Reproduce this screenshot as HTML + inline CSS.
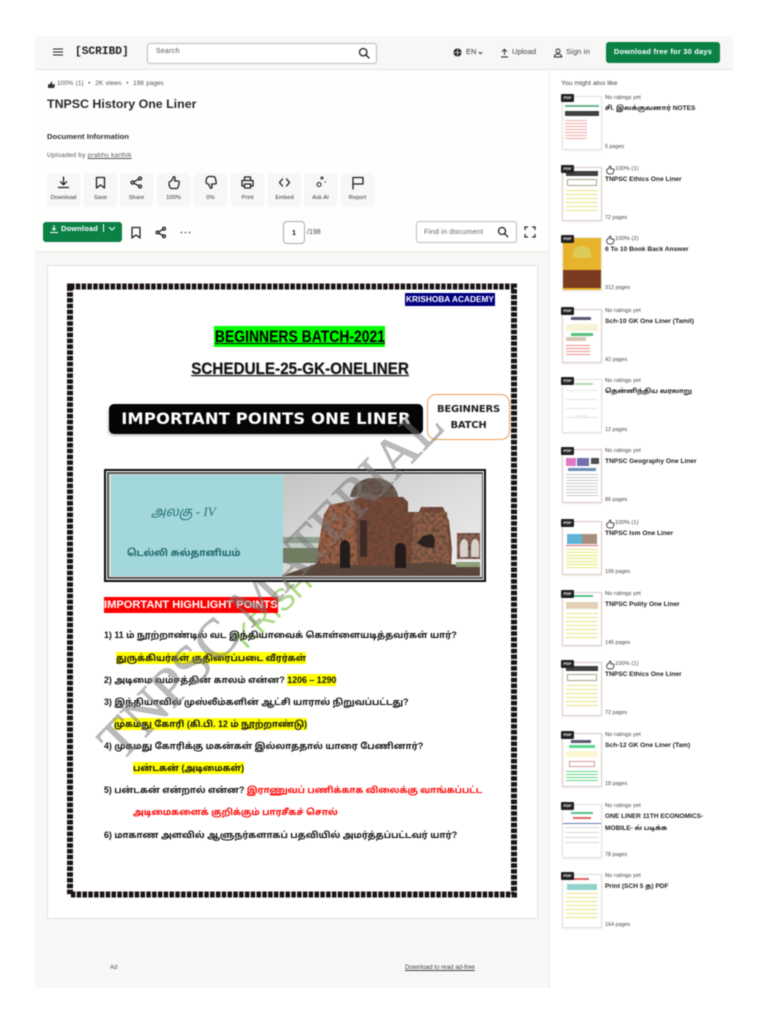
<!DOCTYPE html>
<html lang="en"><head><meta charset="utf-8"><title>TNPSC History One Liner</title>
<style>
*{box-sizing:border-box}
html,body{margin:0;padding:0;background:#fff;width:768px;height:1024px;overflow:hidden}
body{font-family:"Liberation Sans",sans-serif;color:#1e1e1e;position:relative}
#w{position:absolute;left:0;top:0;width:768px;height:1024px;filter:blur(.45px);overflow:hidden}
.a{position:absolute;white-space:nowrap}
.t{position:absolute;left:47px;top:173px;width:33px;height:34px;background:#f8f7f5;border-radius:3px;text-align:center}
.t svg{position:absolute;left:9px;top:2px;width:15px;height:15px}
.t span{position:absolute;left:0;right:0;top:22px;font-size:5.8px;line-height:7px;color:#333}
svg{overflow:visible}
.i{fill:none;stroke:#1e1e1e;stroke-width:1.3;stroke-linecap:round;stroke-linejoin:round}
.q{position:absolute;left:104px;font:bold 8.85px/13px "Liberation Sans","Noto Sans Tamil","Lohit Tamil",sans-serif;color:#111;white-space:nowrap}
.y{background:#ff0;padding:1px 0}
.s{position:absolute;left:561px;width:180px;height:60px}
.s .th{position:absolute;left:1px;top:2px;width:40px;height:54px;background:#fff;border:1px solid #e4e1dc;box-shadow:0 1px 2px #eee;overflow:hidden}
.s .th .b{opacity:.75}
.s .pdf{position:absolute;left:0;top:0;width:13px;height:8px;background:#222;color:#fff;font:bold 4px/8px "Liberation Sans",sans-serif;text-align:center;border-radius:1px}
.s .r{position:absolute;left:44px;top:0;font-size:5.8px;line-height:8px;color:#444;white-space:nowrap}
.s .r.u{left:54px}
.s .n{position:absolute;left:44px;top:9px;font:bold 6.6px/11.5px "Liberation Sans","Noto Sans Tamil",sans-serif;color:#222;white-space:nowrap}
.s .p{position:absolute;left:44px;top:49px;font-size:5.4px;line-height:8px;color:#444;white-space:nowrap}
.s svg.u{position:absolute;left:44px;top:0;width:10px;height:10px}
.b{position:absolute}
</style></head><body><div id="w">

<!-- header -->
<div class="a" style="left:35px;top:36px;width:698px;height:34px;background:#f8f7f5;border-bottom:1px solid #e7e5e1"></div>
<svg class="a" style="left:52px;top:48px" width="12" height="8"><path d="M1 1h10M1 4h10M1 7h10" stroke="#222" stroke-width="1.1"/></svg>
<div class="a" style="left:75px;top:44px;font:bold 11.2px/16px 'Liberation Mono',monospace;color:#1e1e1e">[SCRIBD]</div>
<div class="a" style="left:147px;top:43px;width:230px;height:21px;background:#fff;border:1px solid #bdbbb6;border-radius:3px"></div>
<div class="a" style="left:156px;top:47px;font-size:7px;line-height:10px;color:#555;letter-spacing:.25px">Search</div>
<svg class="a i" style="left:358px;top:47px" width="12" height="12" viewBox="0 0 12 12"><circle cx="5.2" cy="5.2" r="3.7"/><path d="M8 8l3 3"/></svg>
<svg class="a" style="left:453px;top:48px" width="9" height="9" viewBox="0 0 9 9"><circle cx="4.5" cy="4.5" r="4" fill="#222"/><path d="M1 4.5h7M4.5 1v7" stroke="#f8f7f5" stroke-width=".7"/></svg>
<div class="a" style="left:466px;top:47px;font-size:7.5px;line-height:10px;color:#333">EN</div>
<svg class="a" style="left:478px;top:51px" width="5" height="4"><path d="M.7 1l1.8 1.8L4.3 1" fill="none" stroke="#333" stroke-width=".9"/></svg>
<svg class="a" style="left:500px;top:48px" width="9" height="10" viewBox="0 0 9 10"><path d="M4.5 7V1.5M2 3.8l2.5-2.5L7 3.8M1 9h7" fill="none" stroke="#222" stroke-width=".9"/></svg>
<div class="a" style="left:512px;top:47px;font-size:7.6px;line-height:10px;color:#444">Upload</div>
<svg class="a" style="left:553px;top:48px" width="10" height="10" viewBox="0 0 10 10"><circle cx="5" cy="3" r="2" fill="none" stroke="#222" stroke-width=".9"/><path d="M1.2 9c.3-2.3 1.8-3 3.8-3s3.500 .7 3.800 3z" fill="none" stroke="#222" stroke-width=".9"/></svg>
<div class="a" style="left:566px;top:47px;font-size:7.6px;line-height:10px;color:#444;letter-spacing:.1px">Sign in</div>
<div class="a" style="left:606px;top:42px;width:114px;height:21px;background:#0b8146;border-radius:3px;color:#fff;font:bold 7.4px/20px 'Liberation Sans',sans-serif;text-align:center;letter-spacing:.25px">Download free for 30 days</div>

<!-- top section -->
<div class="a" style="left:35px;top:71px;width:514px;height:180px;background:#fefefd"></div>
<div class="a" style="left:549px;top:71px;width:1px;height:917px;background:#ecebe7"></div>
<svg class="a" style="left:48px;top:81px" width="7" height="7" viewBox="0 0 7 7"><path d="M0 3.200h1.800L3.400 .4l.8 .6-.2 2.200H7L6.200 7H0z" fill="#333"/></svg>
<div class="a" style="left:57px;top:80px;font-size:6.4px;line-height:8px;color:#555;word-spacing:.6px">100% (1) &nbsp;•&nbsp; 2K views &nbsp;•&nbsp; 198 pages</div>
<div class="a" style="left:47px;top:96px;font:bold 12.4px/16px 'Liberation Sans',sans-serif;color:#2a2a2a">TNPSC History One Liner</div>
<div class="a" style="left:47px;top:132px;font:bold 7.7px/10px 'Liberation Sans',sans-serif;color:#333">Document Information</div>
<div class="a" style="left:47px;top:151px;font-size:6.4px;line-height:9px;color:#555;letter-spacing:.25px">Uploaded by <span style="text-decoration:underline">prabhu karthik</span></div>

<!-- toolbar -->
<div class="t" style="left:47px"><svg class="i" viewBox="0 0 15 15"><path d="M7.500 2v7.500M4.500 6.800l3 3 3-3M2.500 12.500h10"/></svg><span>Download</span></div>
<div class="t" style="left:84px"><svg class="i" viewBox="0 0 15 15"><path d="M3.500 2.500h8v10.500l-4-3-4 3z"/></svg><span>Save</span></div>
<div class="t" style="left:120px"><svg class="i" viewBox="0 0 15 15"><circle cx="3.500" cy="7.500" r="1.500"/><circle cx="11" cy="3.500" r="1.500"/><circle cx="11" cy="11.500" r="1.500"/><path d="M5 6.700l4.600-2.500M5 8.300l4.600 2.500"/></svg><span>Share</span></div>
<div class="t" style="left:157px"><svg class="i" viewBox="0 0 15 15"><path d="M3 8c0-1 1-2 2.500-2L7.500 1.800c1-.3 1.800 .5 1.500 1.700L8.700 6H12c1 0 1.500 1 1.200 2l-1 4c-.3 1-1 1.500-2 1.500H6c-2 0-3-2.500-3-5.500z"/></svg><span>100%</span></div>
<div class="t" style="left:194px"><svg class="i" viewBox="0 0 15 15"><path d="M3 7c0 1 1 2 2.500 2l2 4.200c1 .3 1.800-.5 1.500-1.700L8.700 9H12c1 0 1.500-1 1.200-2l-1-4c-.3-1-1-1.500-2-1.500H6C4 1.500 3 4 3 7z"/></svg><span>0%</span></div>
<div class="t" style="left:231px"><svg class="i" viewBox="0 0 15 15"><path d="M4.500 5V2h6v3M4 11H2V5.500h11V11h-2M4.500 9h6v4h-6z"/></svg><span>Print</span></div>
<div class="t" style="left:268px"><svg class="i" viewBox="0 0 15 15"><path d="M5.500 4l-3 3.500 3 3.500M9.500 4l3 3.500-3 3.500"/></svg><span>Embed</span></div>
<div class="t" style="left:304px"><svg class="i" style="stroke-width:1" viewBox="0 0 15 15"><circle cx="6" cy="9.500" r="2"/><circle cx="9" cy="3" r="1"/><path d="M12 7h.6"/></svg><span>Ask AI</span></div>
<div class="t" style="left:341px"><svg class="i" viewBox="0 0 15 15"><path d="M3 14V2.500h10v6.500H3"/></svg><span>Report</span></div>

<!-- action row -->
<div class="a" style="left:43px;top:222px;width:79px;height:20px;background:#0b8146;border-radius:3px"></div>
<svg class="a" style="left:49px;top:224px" width="10" height="10" viewBox="0 0 10 10"><path d="M5 1v5M3 4.200L5 6.200 7 4.200M1 8.500h8" fill="none" stroke="#fff" stroke-width="1"/></svg>
<div class="a" style="left:61px;top:224px;font:bold 7.500px/10px 'Liberation Sans',sans-serif;color:#fff;letter-spacing:.15px">Download</div>
<div class="a" style="left:103px;top:224px;width:1px;height:8px;background:#fff"></div>
<svg class="a" style="left:108px;top:226px" width="8" height="5"><path d="M1 1l3 3 3-3" fill="none" stroke="#fff" stroke-width="1"/></svg>
<svg class="a i" style="left:130px;top:226px" width="12" height="13" viewBox="0 0 12 13"><path d="M2 1.500h8v10.500l-4-3-4 3z"/></svg>
<svg class="a i" style="left:155px;top:226px" width="12" height="13" viewBox="0 0 12 13"><circle cx="2.500" cy="6.500" r="1.400"/><circle cx="9" cy="2.700" r="1.400"/><circle cx="9" cy="10.300" r="1.400"/><path d="M3.800 5.800l4-2.400M3.800 7.200l4 2.400"/></svg>
<svg class="a" style="left:180px;top:231px" width="11" height="3"><circle cx="1.500" cy="1.500" r=".8" fill="#333"/><circle cx="5.500" cy="1.500" r=".8" fill="#333"/><circle cx="9.500" cy="1.500" r=".8" fill="#333"/></svg>
<div class="a" style="left:283px;top:221px;width:22px;height:23px;background:#fff;border:1px solid #aaa;border-radius:4px;font:bold 7.500px/21px 'Liberation Sans',sans-serif;text-align:center">1</div>
<div class="a" style="left:307px;top:228px;font-size:7px;line-height:10px;color:#444">/198</div>
<div class="a" style="left:416px;top:221px;width:101px;height:22px;background:#fff;border:1px solid #bdbbb6;border-radius:3px"></div>
<div class="a" style="left:424px;top:227px;font-size:7.500px;line-height:10px;color:#666;letter-spacing:.1px">Find in document</div>
<svg class="a i" style="left:497px;top:226px" width="12" height="12" viewBox="0 0 12 12"><circle cx="5" cy="5" r="3.500"/><path d="M7.800 7.800l3 3"/></svg>
<svg class="a" style="left:524px;top:226px" width="12" height="12" viewBox="0 0 12 12"><path d="M1 4V1h3M8 1h3v3M11 8v3H8M4 11H1V8" fill="none" stroke="#222" stroke-width="1.200"/></svg>

<!-- viewer -->
<div class="a" style="left:35px;top:251px;width:514px;height:737px;background:#f8f7f5;border-top:1px solid #ecebe7"></div>
<div class="a" style="left:47px;top:265px;width:491px;height:654px;background:#fff;border:1px solid #e4e3e0"></div>
<svg class="a" style="left:0;top:0" width="768" height="1024"><rect x="70" y="286.500" width="444" height="608" fill="none" stroke="#1a1412" stroke-width="6" stroke-dasharray="4.500 1.300"/></svg>

<!-- green watermark sits beneath the banner -->
<svg class="a" style="left:0;top:0" width="768" height="1024">
<text transform="translate(246,650) rotate(-44)" font-family="'Liberation Sans',sans-serif" font-size="31" fill="#7fc241" fill-opacity=".65">KRISHOBA</text>
</svg>

<div class="a" style="left:405px;top:293px;width:90px;height:13px;background:#00007f;color:#fff;font:bold 8.300px/13px 'Liberation Sans',sans-serif;text-align:center">KRISHOBA ACADEMY</div>
<div class="a" style="left:214px;top:326px;width:171px;height:21px;background:#0f0"></div>
<div class="a" style="left:180px;top:326px;width:240px;color:#000;font:bold 17px/22px 'Liberation Sans',sans-serif;text-align:center;text-decoration:underline;transform:scaleX(.82)">BEGINNERS BATCH-2021</div>
<div class="a" style="left:170px;top:358px;width:260px;color:#111;font:bold 17px/21px 'Liberation Sans',sans-serif;text-align:center;text-decoration:underline;text-shadow:.5px .5px 1px #999;transform:scaleX(.897)">SCHEDULE-25-GK-ONELINER</div>
<div class="a" style="left:109px;top:404px;width:314px;height:30px;background:#050505;border-radius:5px;box-shadow:-1px 2px 2px #ccc;color:#fff;font:bold 16.350px/30px 'DejaVu Sans',sans-serif;text-align:center;letter-spacing:.15px">IMPORTANT POINTS ONE LINER</div>
<div class="a" style="left:427px;top:394px;width:83px;height:46px;background:#fff;border:1px solid #ef9f5a;border-radius:9px;color:#222;font:bold 10px/15.500px 'DejaVu Sans',sans-serif;text-align:center;padding-top:7px;letter-spacing:-.2px">BEGINNERS<br>BATCH</div>

<!-- banner -->
<div class="a" style="left:104px;top:469px;width:382px;height:113px;background:#0a0a0a"></div>
<div class="a" style="left:106px;top:471px;width:378px;height:109px;background:#fff"></div>
<div class="a" style="left:107px;top:472px;width:376px;height:107px;background:#555"></div>
<div class="a" style="left:109px;top:474px;width:373px;height:103px;background:#ddd"></div>
<svg class="a" style="left:111px;top:475px" width="369" height="101" viewBox="0 0 369 101">
<defs><linearGradient id="sk" x1="0" y1="0" x2="1" y2="1"><stop offset="0" stop-color="#c4c5c3"/><stop offset=".5" stop-color="#dcdcdc"/><stop offset="1" stop-color="#eeeeee"/></linearGradient>
<filter id="gr" x="0" y="0" width="100%" height="100%"><feTurbulence type="fractalNoise" baseFrequency=".28" numOctaves="3" seed="4"/><feColorMatrix values="0 0 0 0 .1 0 0 0 0 .06 0 0 0 0 .04 0 0 0 2.400 -.85"/><feComposite in2="SourceAlpha" operator="in"/><feMerge><feMergeNode in="SourceGraphic"/><feMergeNode/></feMerge></filter></defs>
<rect width="172" height="101" fill="#a2d8dc"/>
<rect x="172" width="197" height="101" fill="url(#sk)"/>
<rect x="172" y="62" width="40" height="6" fill="#8f9f8f"/>
<rect x="172" y="68" width="36" height="5" fill="#c4cac6"/>
<rect x="172" y="73" width="36" height="15" fill="#6f7d60"/>
<g filter="url(#gr)">
<path d="M239 22c2-13 12-19 24-19s22 6 24 19z" fill="#6a5d55"/>
<path d="M204 92l5-30 4-22 6-10 24-5 5-3h44l5 5v10h11l2-5h22l6 14 3 28-1 18z" fill="#7c4a38"/>
<path d="M204 92l5-30 4-22 6-10 24-5 4 70z" fill="#a06448"/>
<path d="M302 37h34l3 55h-38z" fill="#93604a"/>
<path d="M346 58h23v26h-23z" fill="#8d6455"/>
<path d="M170 101l38-13 60 3 50-4 51 5v9z" fill="#5c4a3e"/>
</g>
<path d="M249 45h7v37h-7z" fill="#3c2b26"/>
<path d="M229 93V73c0-5 2-8 5-8s5 3 5 8v20z" fill="#231c1a"/>
<path d="M284 93V75c0-5 2-7 5.500-7s5.500 2 5.500 7v18z" fill="#231c1a"/>
<path d="M306 68l6-7 9-2 3 5-1 9-10-1z" fill="#2b2220"/>
<path d="M349 82v-12c1-4 2-6 4-6s4 2 4 6v12zM360 82v-12c1-4 2-6 4-6s4 2 4 6v12z" fill="#d8d2cc"/>
<rect x="345" y="87" width="24" height="5" fill="#8f9e78"/>
<text x="40" y="41" font-family="'Liberation Serif','Noto Sans Tamil',serif" font-style="italic" font-size="13" fill="#2a7478">அலகு - IV</text>
<text x="16" y="81" font-family="'Liberation Sans','Noto Sans Tamil',sans-serif" font-weight="bold" font-size="9.600" fill="#1f6468">டெல்லி சுல்தானியம்</text>
</svg>

<!-- body text -->
<div class="a" style="left:104px;top:597px;width:174px;height:16px;background:#f00;color:#fff;font:bold 11.100px/16px 'Liberation Sans',sans-serif">IMPORTANT HIGHLIGHT POINTS</div>
<div class="q" style="top:629px">1) 11 ம் நூற்றாண்டில் வட இந்தியாவைக் கொள்ளையடித்தவர்கள் யார்?</div>
<div class="q" style="top:652px;left:116px"><span class="y">துருக்கியர்கள் குதிரைப்படை வீரர்கள்</span></div>
<div class="q" style="top:674px">2) அடிமை வம்சத்தின் காலம் என்ன? <span class="y">1206 – 1290</span></div>
<div class="q" style="top:696px">3) இந்தியாவில் முஸ்லீம்களின் ஆட்சி யாரால் நிறுவப்பட்டது?</div>
<div class="q" style="top:718px;left:114px"><span class="y">முகமது கோரி (கி.பி. 12 ம் நூற்றாண்டு)</span></div>
<div class="q" style="top:740px">4) முகமது கோரிக்கு மகன்கள் இல்லாததால் யாரை பேணினார்?</div>
<div class="q" style="top:762px;left:133px"><span class="y">பன்டகன் (அடிமைகள்)</span></div>
<div class="q" style="top:784px;font-size:8.78px">5) பன்டகன் என்றால் என்ன? <span style="color:#f00">இராணுவப் பணிக்காக விலைக்கு வாங்கப்பட்ட</span></div>
<div class="q" style="top:806px;left:133px;color:#f00">அடிமைகளைக் குறிக்கும் பாரசீகச் சொல்</div>
<div class="q" style="top:829px">6) மாகாண அளவில் ஆளுநர்களாகப் பதவியில் அமர்த்தப்பட்டவர் யார்?</div>

<!-- grey watermark, hidden over the teal panel -->
<svg class="a" style="left:0;top:0" width="768" height="1024">
<defs><clipPath id="wm"><rect x="0" y="0" width="768" height="475"/><rect x="0" y="582" width="768" height="442"/><rect x="283" y="475" width="485" height="107"/></clipPath></defs>
<g clip-path="url(#wm)"><text transform="translate(121,763) rotate(-45.800)" font-family="'Liberation Serif',serif" font-size="55.500" fill="#777" fill-opacity=".5" stroke="#777" stroke-opacity=".35" stroke-width=".8">TNPSC MATERIAL</text></g>
</svg>

<div class="a" style="left:110px;top:964px;font-size:6px;line-height:8px;color:#555">Ad</div>
<div class="a" style="left:405px;top:964px;font-size:6.200px;line-height:8px;color:#444;text-decoration:underline">Download to read ad-free</div>

<!-- sidebar -->
<div class="a" style="left:561px;top:79px;font-size:6.800px;line-height:9px;color:#444">You might also like</div>

<div class="s" style="top:94px"><div class="th"><div class="b" style="left:2px;top:8px;width:34px;height:2px;background:#3a9a6a"></div><div class="b" style="left:2px;top:14px;width:34px;height:5px;background:#000"></div><div class="b" style="left:2px;top:23px;width:22px;height:20px;background:repeating-linear-gradient(#e88 0 1px,#fff 1px 3px)"></div></div><div class="pdf">PDF</div><div class="r">No ratings yet</div><div class="n">சி. இலக்குவனார் NOTES</div><div class="p">5 pages</div></div>
<div class="s" style="top:165px"><div class="th" style="border-color:#d9c9c4"><div class="b" style="left:3px;top:3px;width:32px;height:5px;background:#000"></div><div class="b" style="left:4px;top:11px;width:30px;height:7px;border:1px solid #886"></div><div class="b" style="left:3px;top:22px;width:32px;height:24px;background:repeating-linear-gradient(#dddd55 0 1px,#fff 1px 4px)"></div></div><div class="pdf">PDF</div><svg class="u" viewBox="0 0 9 9"><path d="M1.500 5c0-1 .8-1.500 1.500-1.500l1.500-2.500c.8 0 1 .6 .8 1.300L5.200 3.500H7.500c.6 0 .8 .6 .6 1.200L7.500 7c-.2 .6-.6 1-1.200 1H3.500C2.300 8 1.500 6.800 1.500 5z" fill="none" stroke="#333" stroke-width=".8"/></svg><div class="r u">100% (1)</div><div class="n">TNPSC Ethics One Liner</div><div class="p">72 pages</div></div>
<div class="s" style="top:235px"><div class="th" style="background:#e8b32c;border-color:#eee"><div class="b" style="left:10px;top:8px;width:18px;height:12px;background:#d8d26a;border-radius:8px 8px 0 0"></div><div class="b" style="left:0;top:32px;width:38px;height:18px;background:#7c3a20;opacity:1"></div></div><div class="pdf">PDF</div><svg class="u" viewBox="0 0 9 9"><path d="M1.500 5c0-1 .8-1.500 1.500-1.500l1.500-2.500c.8 0 1 .6 .8 1.300L5.200 3.500H7.500c.6 0 .8 .6 .6 1.200L7.500 7c-.2 .6-.6 1-1.200 1H3.500C2.300 8 1.500 6.800 1.500 5z" fill="none" stroke="#333" stroke-width=".8"/></svg><div class="r u">100% (2)</div><div class="n">6 To 10 Book Back Answer</div><div class="p">312 pages</div></div>
<div class="s" style="top:307px"><div class="th" style="border-color:#d9c9c4"><div class="b" style="left:8px;top:7px;width:20px;height:3px;background:#224"></div><div class="b" style="left:3px;top:14px;width:32px;height:7px;background:#f4f0c8"></div><div class="b" style="left:8px;top:23px;width:22px;height:3px;background:#2a5"></div><div class="b" style="left:3px;top:27px;width:20px;height:4px;background:#c9b39a"></div><div class="b" style="left:3px;top:35px;width:24px;height:12px;background:repeating-linear-gradient(#e66 0 1px,#fff 1px 3px)"></div></div><div class="pdf">PDF</div><div class="r">No ratings yet</div><div class="n">Sch-10 GK One Liner (Tamil)</div><div class="p">42 pages</div></div>
<div class="s" style="top:377px"><div class="th"><div class="b" style="left:12px;top:3px;width:18px;height:2px;background:#9c9"></div><div class="b" style="left:12px;top:35px;width:14px;height:2px;background:#9c9"></div><div class="b" style="left:3px;top:10px;width:32px;height:34px;background:repeating-linear-gradient(#ddd 0 1px,#fff 1px 9px)"></div></div><div class="pdf">PDF</div><div class="r">No ratings yet</div><div class="n">தென்னிந்திய வரலாறு</div><div class="p">12 pages</div></div>
<div class="s" style="top:447px"><div class="th" style="border-color:#d9c9c4"><div class="b" style="left:3px;top:8px;width:10px;height:8px;background:#d44cb0"></div><div class="b" style="left:14px;top:8px;width:12px;height:8px;background:#424090"></div><div class="b" style="left:28px;top:8px;width:8px;height:6px;background:#111"></div><div class="b" style="left:5px;top:18px;width:28px;height:3px;background:#3a6aa0"></div><div class="b" style="left:3px;top:24px;width:32px;height:22px;background:repeating-linear-gradient(#bbb 0 1px,#fff 1px 3px)"></div></div><div class="pdf">PDF</div><div class="r">No ratings yet</div><div class="n">TNPSC Geography One Liner</div><div class="p">86 pages</div></div>
<div class="s" style="top:519px"><div class="th" style="border-color:#d9c9c4"><div class="b" style="left:4px;top:12px;width:15px;height:10px;background:#2a9ac9"></div><div class="b" style="left:19px;top:12px;width:15px;height:10px;background:#8a6a50"></div><div class="b" style="left:3px;top:23px;width:32px;height:1px;background:#d33"></div><div class="b" style="left:3px;top:27px;width:32px;height:20px;background:repeating-linear-gradient(#e4e44c 0 1px,#fff 1px 3px)"></div></div><div class="pdf">PDF</div><svg class="u" viewBox="0 0 9 9"><path d="M1.500 5c0-1 .8-1.500 1.500-1.500l1.500-2.500c.8 0 1 .6 .8 1.300L5.200 3.500H7.500c.6 0 .8 .6 .6 1.200L7.500 7c-.2 .6-.6 1-1.200 1H3.500C2.300 8 1.500 6.800 1.500 5z" fill="none" stroke="#333" stroke-width=".8"/></svg><div class="r u">100% (1)</div><div class="n">TNPSC Ism One Liner</div><div class="p">106 pages</div></div>
<div class="s" style="top:590px"><div class="th" style="border-color:#d9c9c4"><div class="b" style="left:8px;top:2px;width:22px;height:2px;background:#2a6"></div><div class="b" style="left:3px;top:9px;width:32px;height:7px;background:#d9c3a0"></div><div class="b" style="left:3px;top:20px;width:32px;height:28px;background:repeating-linear-gradient(#dede5a 0 1px,#fff 1px 4px)"></div></div><div class="pdf">PDF</div><div class="r">No ratings yet</div><div class="n">TNPSC Polity One Liner</div><div class="p">145 pages</div></div>
<div class="s" style="top:660px"><div class="th" style="border-color:#d9c9c4"><div class="b" style="left:3px;top:3px;width:32px;height:5px;background:#000"></div><div class="b" style="left:4px;top:11px;width:30px;height:7px;border:1px solid #886"></div><div class="b" style="left:3px;top:22px;width:32px;height:24px;background:repeating-linear-gradient(#dddd55 0 1px,#fff 1px 4px)"></div></div><div class="pdf">PDF</div><svg class="u" viewBox="0 0 9 9"><path d="M1.500 5c0-1 .8-1.500 1.500-1.500l1.500-2.500c.8 0 1 .6 .8 1.300L5.200 3.500H7.500c.6 0 .8 .6 .6 1.200L7.500 7c-.2 .6-.6 1-1.200 1H3.500C2.300 8 1.500 6.800 1.500 5z" fill="none" stroke="#333" stroke-width=".8"/></svg><div class="r u">100% (1)</div><div class="n">TNPSC Ethics One Liner</div><div class="p">72 pages</div></div>
<div class="s" style="top:731px"><div class="th" style="border-color:#d9c9c4"><div class="b" style="left:8px;top:6px;width:20px;height:3px;background:#224"></div><div class="b" style="left:6px;top:11px;width:26px;height:3px;background:#2c6"></div><div class="b" style="left:3px;top:17px;width:32px;height:6px;background:#fbf4c0"></div><div class="b" style="left:6px;top:27px;width:26px;height:6px;border:1px solid #c77"></div><div class="b" style="left:3px;top:37px;width:32px;height:10px;background:repeating-linear-gradient(#3c6 0 1px,#fff 1px 3px)"></div></div><div class="pdf">PDF</div><div class="r">No ratings yet</div><div class="n">Sch-12 GK One Liner (Tam)</div><div class="p">18 pages</div></div>
<div class="s" style="top:802px"><div class="th"><div class="b" style="left:8px;top:7px;width:22px;height:2px;background:#2a6"></div><div class="b" style="left:10px;top:12px;width:18px;height:2px;background:#d33"></div><div class="b" style="left:0;top:18px;width:38px;height:1px;background:#2a4a9a"></div><div class="b" style="left:2px;top:22px;width:34px;height:20px;background:repeating-linear-gradient(#ccc 0 1px,#fff 1px 5px)"></div></div><div class="pdf">PDF</div><div class="r">No ratings yet</div><div class="n">ONE LINER 11TH ECONOMICS-<br>MOBILE- ல் படிக்க</div><div class="p">78 pages</div></div>
<div class="s" style="top:872px"><div class="th" style="border-color:#ddd"><div class="b" style="left:10px;top:3px;width:16px;height:2px;background:#d33"></div><div class="b" style="left:4px;top:9px;width:30px;height:6px;background:#6cc4b8"></div><div class="b" style="left:3px;top:18px;width:32px;height:28px;background:repeating-linear-gradient(#dede5a 0 1px,#fff 1px 4px)"></div></div><div class="pdf">PDF</div><div class="r">No ratings yet</div><div class="n">Print (SCH 5 த) PDF</div><div class="p">164 pages</div></div>

</div></body></html>
